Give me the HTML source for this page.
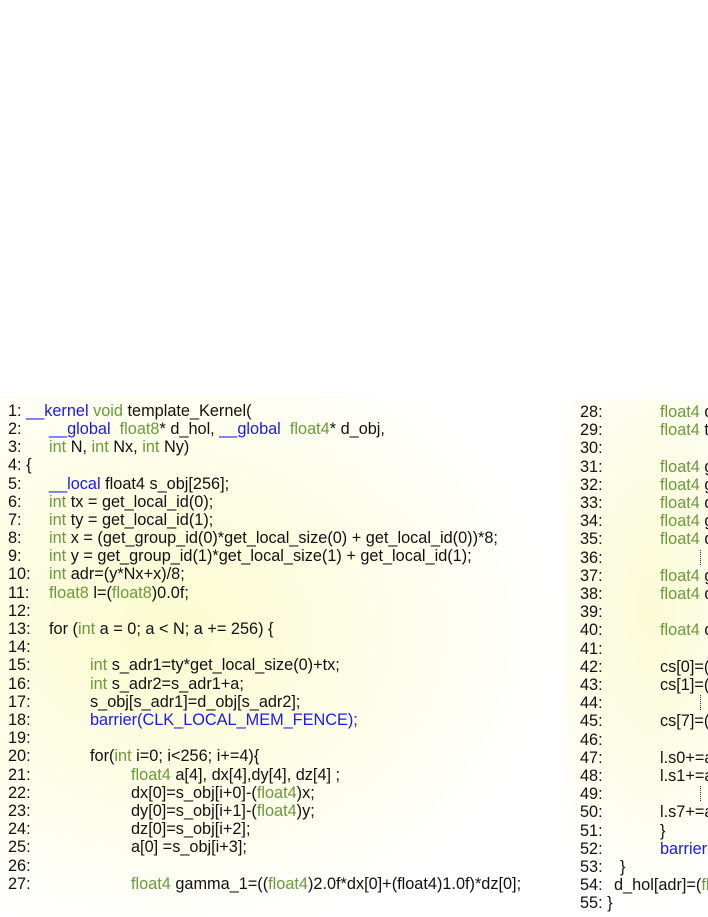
<!DOCTYPE html>
<html><head><meta charset="utf-8"><style>
html,body{margin:0;padding:0;width:708px;height:917px;overflow:hidden;background:#fff;}
.p{position:absolute;}
#L{left:0;top:396px;width:556px;height:521px;background:radial-gradient(ellipse 70% 60% at 30% 45%,#fbfbcf 0%,#fdfde6 50%,#ffffff 100%);}
#R{left:563px;top:399px;width:145px;height:518px;background:radial-gradient(ellipse 90% 60% at 60% 40%,#fbfbd6 0%,#fdfde9 55%,#ffffff 100%);}
.l{position:absolute;font-family:"Liberation Sans",Arial,sans-serif;font-size:16.3px;line-height:18px;color:#111;white-space:pre;margin-top:1px;}
.b{color:#1a1aee;}.g{color:#6b9a3c;}
.d{position:absolute;left:700px;width:0;border-left:1px dotted #333;height:15px;}
</style></head><body>
<div class="p" id="L"></div><div class="p" id="R"></div>
<div class="l" style="left:8px;top:401px">1: <span class="b">__kernel</span> <span class="g">void</span> template_Kernel(</div>
<div class="l" style="left:8px;top:419px">2:</div><div class="l" style="left:49px;top:419px"><span class="b">__global</span>  <span class="g">float8</span>* d_hol, <span class="b">__global</span>  <span class="g">float4</span>* d_obj,</div>
<div class="l" style="left:8px;top:437px">3:</div><div class="l" style="left:49px;top:437px"><span class="g">int</span> N, <span class="g">int</span> Nx, <span class="g">int</span> Ny)</div>
<div class="l" style="left:8px;top:455px">4: {</div>
<div class="l" style="left:8px;top:474px">5:</div><div class="l" style="left:49px;top:474px"><span class="b">__local</span> float4 s_obj[256];</div>
<div class="l" style="left:8px;top:492px">6:</div><div class="l" style="left:49px;top:492px"><span class="g">int</span> tx = get_local_id(0);</div>
<div class="l" style="left:8px;top:510px">7:</div><div class="l" style="left:49px;top:510px"><span class="g">int</span> ty = get_local_id(1);</div>
<div class="l" style="left:8px;top:528px">8:</div><div class="l" style="left:49px;top:528px"><span class="g">int</span> x = (get_group_id(0)*get_local_size(0) + get_local_id(0))*8;</div>
<div class="l" style="left:8px;top:546px">9:</div><div class="l" style="left:49px;top:546px"><span class="g">int</span> y = get_group_id(1)*get_local_size(1) + get_local_id(1);</div>
<div class="l" style="left:8px;top:564px">10:</div><div class="l" style="left:49px;top:564px"><span class="g">int</span> adr=(y*Nx+x)/8;</div>
<div class="l" style="left:8px;top:583px">11:</div><div class="l" style="left:49px;top:583px"><span class="g">float8</span> l=(<span class="g">float8</span>)0.0f;</div>
<div class="l" style="left:8px;top:601px">12:</div>
<div class="l" style="left:8px;top:619px">13:</div><div class="l" style="left:49px;top:619px">for (<span class="g">int</span> a = 0; a &lt; N; a += 256) {</div>
<div class="l" style="left:8px;top:637px">14:</div>
<div class="l" style="left:8px;top:655px">15:</div><div class="l" style="left:90px;top:655px"><span class="g">int</span> s_adr1=ty*get_local_size(0)+tx;</div>
<div class="l" style="left:8px;top:674px">16:</div><div class="l" style="left:90px;top:674px"><span class="g">int</span> s_adr2=s_adr1+a;</div>
<div class="l" style="left:8px;top:692px">17:</div><div class="l" style="left:90px;top:692px">s_obj[s_adr1]=d_obj[s_adr2];</div>
<div class="l" style="left:8px;top:710px">18:</div><div class="l" style="left:90px;top:710px"><span class="b">barrier(CLK_LOCAL_MEM_FENCE);</span></div>
<div class="l" style="left:8px;top:728px">19:</div>
<div class="l" style="left:8px;top:746px">20:</div><div class="l" style="left:90px;top:746px">for(<span class="g">int</span> i=0; i&lt;256; i+=4){</div>
<div class="l" style="left:8px;top:765px">21:</div><div class="l" style="left:131px;top:765px"><span class="g">float4</span> a[4], dx[4],dy[4], dz[4] ;</div>
<div class="l" style="left:8px;top:783px">22:</div><div class="l" style="left:131px;top:783px">dx[0]=s_obj[i+0]-(<span class="g">float4</span>)x;</div>
<div class="l" style="left:8px;top:801px">23:</div><div class="l" style="left:131px;top:801px">dy[0]=s_obj[i+1]-(<span class="g">float4</span>)y;</div>
<div class="l" style="left:8px;top:819px">24:</div><div class="l" style="left:131px;top:819px">dz[0]=s_obj[i+2];</div>
<div class="l" style="left:8px;top:837px">25:</div><div class="l" style="left:131px;top:837px">a[0] =s_obj[i+3];</div>
<div class="l" style="left:8px;top:856px">26:</div>
<div class="l" style="left:8px;top:874px">27:</div><div class="l" style="left:131px;top:874px"><span class="g">float4</span> gamma_1=((<span class="g">float4</span>)2.0f*dx[0]+(float4)1.0f)*dz[0];</div>

<div class="l" style="left:580px;top:402px">28:</div><div class="l g" style="left:660px;top:402px">float4 <span style="color:#111">d</span></div>
<div class="l" style="left:580px;top:420px">29:</div><div class="l g" style="left:660px;top:420px">float4 <span style="color:#111">t</span></div>
<div class="l" style="left:580px;top:438px">30:</div>
<div class="l" style="left:580px;top:457px">31:</div><div class="l g" style="left:660px;top:457px">float4 <span style="color:#111">g</span></div>
<div class="l" style="left:580px;top:475px">32:</div><div class="l g" style="left:660px;top:475px">float4 <span style="color:#111">g</span></div>
<div class="l" style="left:580px;top:493px">33:</div><div class="l g" style="left:660px;top:493px">float4 <span style="color:#111">d</span></div>
<div class="l" style="left:580px;top:511px">34:</div><div class="l g" style="left:660px;top:511px">float4 <span style="color:#111">g</span></div>
<div class="l" style="left:580px;top:529px">35:</div><div class="l g" style="left:660px;top:529px">float4 <span style="color:#111">d</span></div>
<div class="l" style="left:580px;top:548px">36:</div><div class="d" style="top:550px"></div>
<div class="l" style="left:580px;top:566px">37:</div><div class="l g" style="left:660px;top:566px">float4 <span style="color:#111">g</span></div>
<div class="l" style="left:580px;top:584px">38:</div><div class="l g" style="left:660px;top:584px">float4 <span style="color:#111">d</span></div>
<div class="l" style="left:580px;top:602px">39:</div>
<div class="l" style="left:580px;top:620px">40:</div><div class="l g" style="left:660px;top:620px">float4 <span style="color:#111">d</span></div>
<div class="l" style="left:580px;top:639px">41:</div>
<div class="l" style="left:580px;top:657px">42:</div><div class="l" style="left:660px;top:657px">cs[0]=(</div>
<div class="l" style="left:580px;top:675px">43:</div><div class="l" style="left:660px;top:675px">cs[1]=(</div>
<div class="l" style="left:580px;top:693px">44:</div><div class="d" style="top:695px"></div>
<div class="l" style="left:580px;top:711px">45:</div><div class="l" style="left:660px;top:711px">cs[7]=(</div>
<div class="l" style="left:580px;top:730px">46:</div>
<div class="l" style="left:580px;top:748px">47:</div><div class="l" style="left:660px;top:748px">l.s0+=a</div>
<div class="l" style="left:580px;top:766px">48:</div><div class="l" style="left:660px;top:766px">l.s1+=a</div>
<div class="l" style="left:580px;top:784px">49:</div><div class="d" style="top:786px"></div>
<div class="l" style="left:580px;top:802px">50:</div><div class="l" style="left:660px;top:802px">l.s7+=a</div>
<div class="l" style="left:580px;top:821px">51:</div><div class="l" style="left:660px;top:821px">}</div>
<div class="l" style="left:580px;top:839px">52:</div><div class="l b" style="left:660px;top:839px">barrier</div>
<div class="l" style="left:580px;top:857px">53:</div><div class="l" style="left:620px;top:857px">}</div>
<div class="l" style="left:580px;top:875px">54:</div><div class="l" style="left:614px;top:875px">d_hol[adr]=(<span class="g">fl</span></div>
<div class="l" style="left:580px;top:893px">55: }</div>
</body></html>
